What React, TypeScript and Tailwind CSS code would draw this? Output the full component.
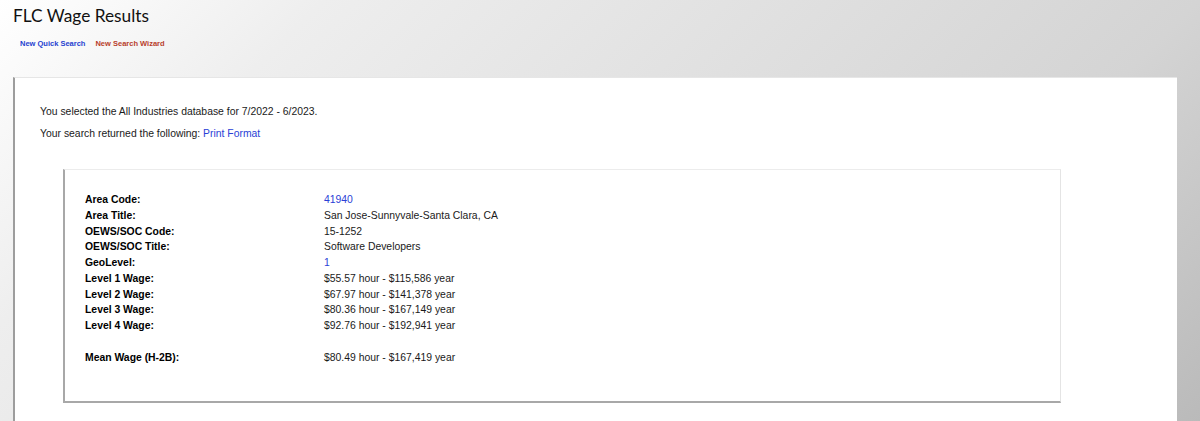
const rows: { label: string; value: string; link?: boolean }[] = [
  { label: "Area Code:", value: "41940", link: true },
  { label: "Area Title:", value: "San Jose-Sunnyvale-Santa Clara, CA" },
  { label: "OEWS/SOC Code:", value: "15-1252" },
  { label: "OEWS/SOC Title:", value: "Software Developers" },
  { label: "GeoLevel:", value: "1", link: true },
  { label: "Level 1 Wage:", value: "$55.57 hour - $115,586 year" },
  { label: "Level 2 Wage:", value: "$67.97 hour - $141,378 year" },
  { label: "Level 3 Wage:", value: "$80.36 hour - $167,149 year" },
  { label: "Level 4 Wage:", value: "$92.76 hour - $192,941 year" },
];

export default function App() {
  return (
    <div className="h-[421px] overflow-hidden bg-[linear-gradient(135deg,#ffffff_0%,#eeeeee_20%,#d4d4d4_74%,#bababa_100%)] font-['Liberation_Sans',Arial,sans-serif]">
      <h1 className="pl-[13px] pt-[4px] text-[17.3px] leading-[24px] text-[#111] font-['Lato',sans-serif]">
        FLC Wage Results
      </h1>

      <div className="mt-[11px] pl-[20px] flex gap-[10px] text-[7.5px] leading-[10px] font-bold">
        <a href="#" className="text-[#1f3fd0]">New Quick Search</a>
        <a href="#" className="text-[#b8402c]">New Search Wizard</a>
      </div>

      <div className="mt-[28px] ml-[13px] w-[1164px] h-[400px] bg-white border-l-2 border-l-[#9d9d9d] border-t border-t-[#e6e6e6] pt-[23px] pl-[25px]">
        <div className="text-[10.4px] leading-[22px] text-[#1a1a1a]">
          <p>You selected the All Industries database for 7/2022 - 6/2023.</p>
          <p>
            Your search returned the following:{" "}
            <a href="#" className="text-[#2a3fd6]">Print Format</a>
          </p>
        </div>

        <div className="mt-[24px] ml-[23px] w-[998px] bg-white border-t border-r border-t-[#ececec] border-r-[#e4e4e4] border-l-2 border-b-2 border-l-[#a8a8a8] border-b-[#a8a8a8] pt-[22px] pb-[36px] pl-[20px]">
          <div className="grid grid-cols-[239px_1fr] text-[10.4px] leading-[15.75px]">
            {rows.map((r) => (
              <div key={r.label} className="contents">
                <div className="font-bold text-black">{r.label}</div>
                <div className={r.link ? "text-[#2a3fd6]" : "text-[#1a1a1a]"}>{r.value}</div>
              </div>
            ))}
            <div className="h-[15.75px]" />
            <div />
            <div className="font-bold text-black">Mean Wage (H-2B):</div>
            <div className="text-[#1a1a1a]">$80.49 hour - $167,419 year</div>
          </div>
        </div>
      </div>
    </div>
  );
}
